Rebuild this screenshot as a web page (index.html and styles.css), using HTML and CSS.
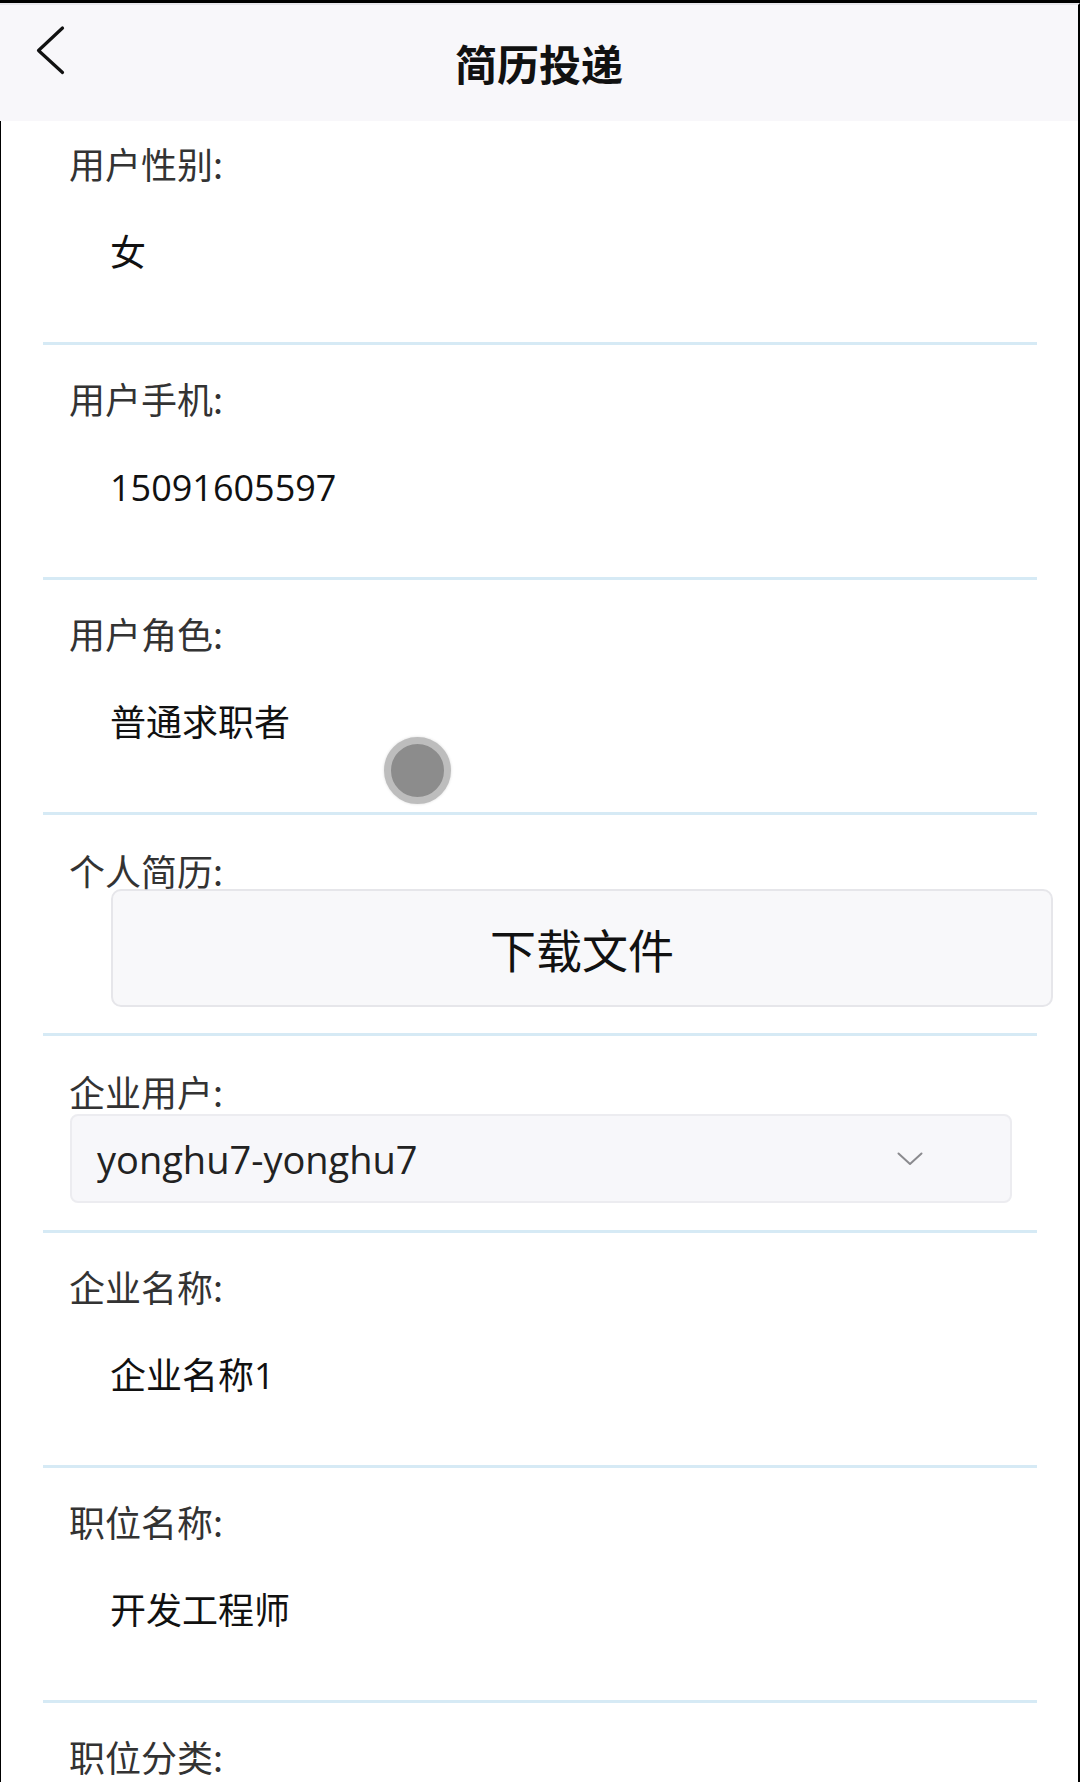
FILE: index.html
```html
<!DOCTYPE html>
<html lang="zh-CN">
<head>
<meta charset="utf-8">
<title>简历投递</title>
<link rel="stylesheet" href="styles.css">
</head>
<body>
<div class="screen">
  <header class="topbar">
    <div class="back">
      <svg class="back-icon" width="40" height="70" viewBox="0 0 40 70">
        <path d="M34.5 6 L10.5 28.5 L34.5 50.5" fill="none" stroke="#111" stroke-width="3.2" stroke-linecap="round" stroke-linejoin="round"/>
      </svg>
    </div>
    <h1 class="title">简历投递</h1>
    <div class="spacer"></div>
  </header>
  <main class="content">
    <section class="field first">
      <div class="label">用户性别:</div>
      <div class="value">女</div>
    </section>
    <section class="field">
      <div class="label">用户手机:</div>
      <div class="value">15091605597</div>
    </section>
    <section class="field">
      <div class="label">用户角色:</div>
      <div class="value">普通求职者</div>
    </section>
    <section class="field field-btn">
      <div class="label">个人简历:</div>
      <button class="download">下载文件</button>
    </section>
    <section class="field field-select">
      <div class="label">企业用户:</div>
      <div class="select">
        <span class="select-text">yonghu7-yonghu7</span>
        <svg class="chev" width="26" height="14" viewBox="0 0 26 14">
          <path d="M1.5 1.5 L13 12 L24.5 1.5" fill="none" stroke="#8a8a8e" stroke-width="2" stroke-linecap="round" stroke-linejoin="round"/>
        </svg>
      </div>
    </section>
    <section class="field">
      <div class="label">企业名称:</div>
      <div class="value">企业名称1</div>
    </section>
    <section class="field">
      <div class="label">职位名称:</div>
      <div class="value">开发工程师</div>
    </section>
    <section class="field last">
      <div class="label">职位分类:</div>
    </section>
    <div class="touch"></div>
  </main>
</div>
</body>
</html>
```
FILE: styles.css
```css
* { box-sizing: border-box; }
html, body { margin: 0; padding: 0; background: #fff; }
body {
  font-family: "Open Sans", "Noto Sans CJK SC", sans-serif;
  color: #111;
}
.screen {
  width: 1080px;
  height: 1782px;
  overflow: hidden;
  display: flex;
  flex-direction: column;
  border-top: 3px solid #000;
}
.topbar {
  height: 118px;
  flex: none;
  background: #f8f7fa;
  border-top: 2px solid #e8e7ec;
  border-right: 2px solid #000;
  display: grid;
  grid-template-columns: 1fr auto 1fr;
  align-items: center;
}
.back { display: flex; align-items: center; padding-left: 28px; }
.back-icon { display: block; margin-top: -12px; }
.title {
  margin: 0;
  font-family: "Noto Sans CJK SC", sans-serif;
  font-size: 42px;
  font-weight: 700;
  line-height: 50px;
  color: #111;
}
.content {
  flex: 1;
  position: relative;
  background: #fff;
  border-left: 1px solid #000;
  border-right: 2px solid #000;
  padding: 0 41px 0 42px;
}
.field {
  border-bottom: 3px solid #d6eaf5;
  padding: 31px 0 64px 0;
}
.field.first { padding-top: 20px; }
.field.last { border-bottom: none; }
.label {
  font-family: "Noto Sans CJK SC", sans-serif;
  font-size: 36px;
  line-height: 44px;
  color: #333;
  padding-left: 26px;
}
.value {
  font-size: 36px;
  line-height: 50px;
  color: #111;
  margin-top: 43px;
  padding-left: 67px;
}
.field-btn { padding: 33px 0 26px 0; }
.download {
  display: flex;
  align-items: center;
  justify-content: center;
  margin: -3px -16px 0 68px;
  width: calc(100% - 52px);
  height: 118px;
  background: #f8f8fa;
  border: 2px solid #e6e6ea;
  border-radius: 10px;
  font-family: "Noto Sans CJK SC", sans-serif;
  font-size: 46px;
  color: #111;
  padding: 0;
}
.field-select { padding: 33px 0 27px 0; }
.select {
  margin: 1px 25px 0 27px;
  height: 89px;
  background: #f7f7fa;
  border: 2px solid #ececf0;
  border-radius: 8px;
  display: flex;
  align-items: center;
  justify-content: space-between;
  padding: 0 87px 0 25px;
}
.select-text {
  font-size: 38px;
  color: #222;
  line-height: 50px;
}
.chev { display: block; }
.touch {
  position: absolute;
  left: 383px;
  top: 616px;
  width: 67px;
  height: 67px;
  border-radius: 50%;
  background: #8c8c8c;
  border: 7px solid #bdbdbd;
  box-shadow: 0 0 3px rgba(0,0,0,0.15);
}
```
